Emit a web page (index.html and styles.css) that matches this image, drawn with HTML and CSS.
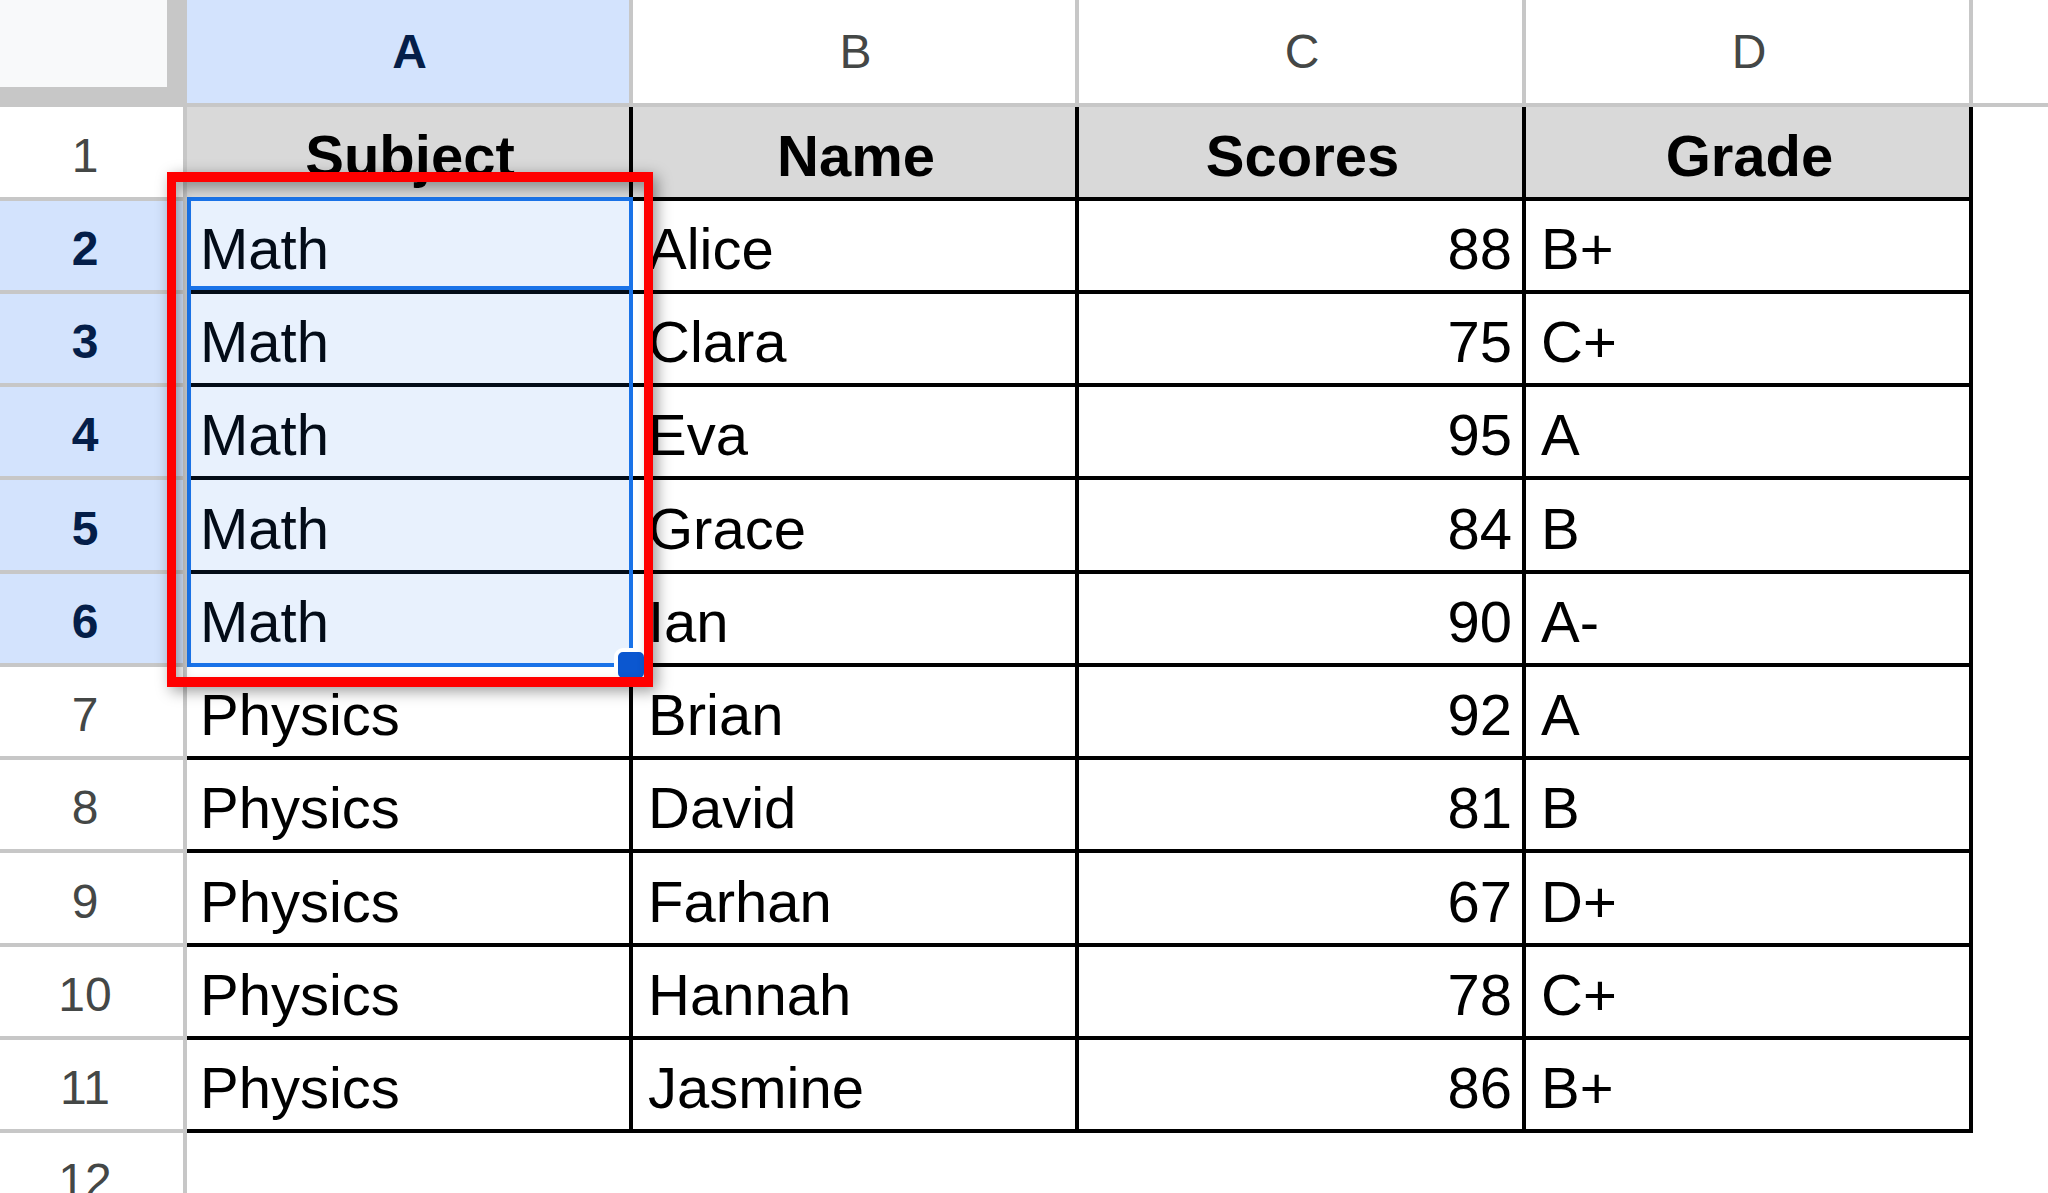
FILE: index.html
```html
<!DOCTYPE html>
<html>
<head>
<meta charset="utf-8">
<title>Sheet</title>
<link rel="stylesheet" href="styles.css">
</head>
<body>
<div class="page">
  <div class="sheet">
    <div class="corner"><div class="corner-box"></div></div>
    <div class="ch sel">A</div>
    <div class="ch">B</div>
    <div class="ch">C</div>
    <div class="ch">D</div>
    <div class="ch last"></div>

    <div class="rh">1</div>
    <div class="cell head">Subject</div>
    <div class="cell head">Name</div>
    <div class="cell head">Scores</div>
    <div class="cell head">Grade</div>
    <div class="blank"></div>

    <div class="rh sel">2</div>
    <div class="cell a">Math</div>
    <div class="cell">Alice</div>
    <div class="cell num">88</div>
    <div class="cell">B+</div>
    <div class="blank"></div>

    <div class="rh sel">3</div>
    <div class="cell a">Math</div>
    <div class="cell">Clara</div>
    <div class="cell num">75</div>
    <div class="cell">C+</div>
    <div class="blank"></div>

    <div class="rh sel">4</div>
    <div class="cell a">Math</div>
    <div class="cell">Eva</div>
    <div class="cell num">95</div>
    <div class="cell">A</div>
    <div class="blank"></div>

    <div class="rh sel">5</div>
    <div class="cell a">Math</div>
    <div class="cell">Grace</div>
    <div class="cell num">84</div>
    <div class="cell">B</div>
    <div class="blank"></div>

    <div class="rh sel">6</div>
    <div class="cell a">Math</div>
    <div class="cell">Ian</div>
    <div class="cell num">90</div>
    <div class="cell">A-</div>
    <div class="blank"></div>

    <div class="rh">7</div>
    <div class="cell a">Physics</div>
    <div class="cell">Brian</div>
    <div class="cell num">92</div>
    <div class="cell">A</div>
    <div class="blank"></div>

    <div class="rh">8</div>
    <div class="cell a">Physics</div>
    <div class="cell">David</div>
    <div class="cell num">81</div>
    <div class="cell">B</div>
    <div class="blank"></div>

    <div class="rh">9</div>
    <div class="cell a">Physics</div>
    <div class="cell">Farhan</div>
    <div class="cell num">67</div>
    <div class="cell">D+</div>
    <div class="blank"></div>

    <div class="rh">10</div>
    <div class="cell a">Physics</div>
    <div class="cell">Hannah</div>
    <div class="cell num">78</div>
    <div class="cell">C+</div>
    <div class="blank"></div>

    <div class="rh">11</div>
    <div class="cell a">Physics</div>
    <div class="cell">Jasmine</div>
    <div class="cell num">86</div>
    <div class="cell">B+</div>
    <div class="blank"></div>

    <div class="rh">12</div>
    <div class="blank"></div>
    <div class="blank"></div>
    <div class="blank"></div>
    <div class="blank"></div>
    <div class="blank"></div>
  </div>

  <div class="selection"></div>
  <div class="active-cell"></div>
  <div class="fill-handle"></div>
  <div class="annotation"></div>
</div>
</body>
</html>
```

FILE: styles.css
```css
html, body {
  margin: 0;
  padding: 0;
  background: #ffffff;
}

body {
  width: 2048px;
  height: 1193px;
  overflow: hidden;
  font-family: "Liberation Sans", Arial, sans-serif;
}

.page {
  position: relative;
  width: 2048px;
  height: 1193px;
  overflow: hidden;
}

.sheet {
  display: grid;
  grid-template-columns: 187px 446px 446px 447px 447px 75px;
  grid-template-rows: 107px 94px 93px 93px 93px 94px 93px 93px 93px 94px 93px 93px 93px;
}

.sheet > div {
  box-sizing: border-box;
  overflow: hidden;
  white-space: nowrap;
}

/* corner with freeze bars */
.corner {
  background: #c7c7c7;
}

.corner-box {
  width: 167px;
  height: 87px;
  background: #f8f9fa;
}

/* column headers */
.ch {
  display: flex;
  align-items: center;
  justify-content: center;
  padding-top: 1px;
  padding-left: 3px;
  border-right: 4px solid #c7c7c7;
  border-bottom: 4px solid #c7c7c7;
  background: #ffffff;
  color: #444746;
  font-size: 48px;
  line-height: 48px;
}

.ch.last {
  border-right: none;
}

.ch.sel {
  background: #d3e3fd;
  color: #041e49;
  font-weight: bold;
}

/* row headers */
.rh {
  display: flex;
  align-items: center;
  justify-content: center;
  padding: 7px 13px 0 0;
  border-right: 4px solid #c7c7c7;
  border-bottom: 4px solid #c7c7c7;
  background: #ffffff;
  color: #444746;
  font-size: 48px;
  line-height: 48px;
}

.rh.sel {
  background: #d3e3fd;
  color: #041e49;
  font-weight: bold;
}

/* data cells */
.cell {
  display: flex;
  align-items: flex-end;
  justify-content: flex-start;
  padding: 0 10px 12px 15px;
  border-right: 4px solid #000000;
  border-bottom: 4px solid #000000;
  color: #000000;
  font-size: 58px;
  line-height: 58px;
  background: #ffffff;
}

.cell.a {
  padding-left: 13px;
}

.cell.num {
  justify-content: flex-end;
}

.cell.head {
  justify-content: center;
  font-weight: bold;
  background: #d9d9d9;
  padding-left: 4px;
  padding-right: 0;
}

.blank {
  background: #ffffff;
}

/* selection overlays */
.selection {
  position: absolute;
  left: 187px;
  top: 197px;
  width: 446px;
  height: 470px;
  box-sizing: border-box;
  border: 4px solid #1a73e8;
  background: rgba(26, 115, 232, 0.1);
}

.active-cell {
  position: absolute;
  left: 187px;
  top: 197px;
  width: 446px;
  height: 93px;
  box-sizing: border-box;
  border: 4px solid #1a73e8;
}

.fill-handle {
  position: absolute;
  left: 614px;
  top: 648px;
  width: 26px;
  height: 26px;
  border: 4px solid #ffffff;
  border-radius: 9px;
  background: #0b57d0;
}

/* red annotation frame */
.annotation {
  position: absolute;
  left: 167px;
  top: 172px;
  width: 486px;
  height: 515px;
  box-sizing: border-box;
  border-style: solid;
  border-color: #ff0000;
  border-width: 10px 9px 10px 9px;
  box-shadow: 4px 4px 14px rgba(0, 0, 0, 0.4), inset 5px 7px 12px rgba(0, 0, 0, 0.32);
}
```
